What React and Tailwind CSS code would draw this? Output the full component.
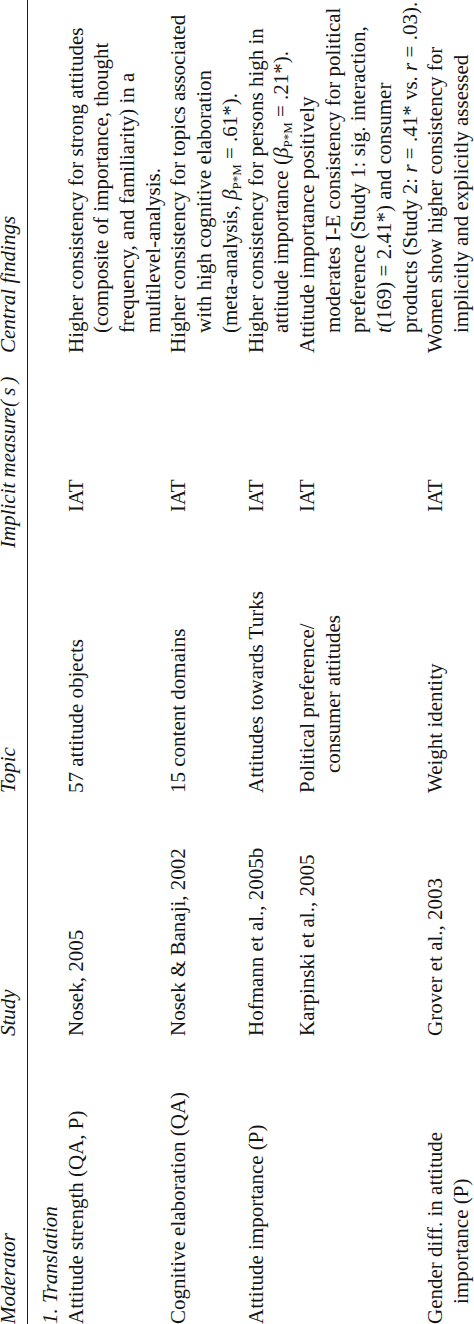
import React from "react";

const Beta = ({ sub }) => (
  <>
    <i>β</i>
    <span className="text-[13px] leading-none align-[-4px]">{sub}</span>
  </>
);

const rows = [
  {
    mod: ["Attitude strength (QA, P)"],
    study: "Nosek, 2005",
    topic: ["57 attitude objects"],
    imp: "IAT",
    find: [
      "Higher consistency for strong attitudes",
      "(composite of importance, thought",
      "frequency, and familiarity) in a",
      "multilevel-analysis.",
    ],
  },
  {
    mod: ["Cognitive elaboration (QA)"],
    study: "Nosek & Banaji, 2002",
    topic: ["15 content domains"],
    imp: "IAT",
    find: [
      "Higher consistency for topics associated",
      "with high cognitive elaboration",
      <>
        (meta-analysis, <Beta sub="P*M" /> = .61*).
      </>,
    ],
  },
  {
    mod: ["Attitude importance (P)"],
    study: "Hofmann et al., 2005b",
    topic: ["Attitudes towards Turks"],
    imp: "IAT",
    find: [
      "Higher consistency for persons high in",
      <>
        attitude importance (<Beta sub="P*M" /> = .21*).
      </>,
    ],
  },
  {
    mod: [],
    study: "Karpinski et al., 2005",
    topic: ["Political preference/", "consumer attitudes"],
    imp: "IAT",
    find: [
      "Attitude importance positively",
      "moderates I-E consistency for political",
      "preference (Study 1: sig. interaction,",
      <>
        <i>t</i>(169) = 2.41*) and consumer
      </>,
      <>
        products (Study 2: <i>r</i> = .41* vs. <i>r</i> = .03).
      </>,
    ],
  },
  {
    mod: ["Gender diff. in attitude", "importance (P)"],
    study: "Grover et al., 2003",
    topic: ["Weight identity"],
    imp: "IAT",
    find: [
      "Women show higher consistency for",
      "implicitly and explicitly assessed",
      "weight identity.",
    ],
  },
];

const Lines = ({ lines }) => (
  <div className="flex flex-col">
    {lines.map((l, i) => (
      <div key={i} className={i > 0 ? "pl-[20px] whitespace-nowrap" : "whitespace-nowrap"}>
        {l}
      </div>
    ))}
  </div>
);

export default function App() {
  return (
    <div className="w-[474px] h-[1324px] overflow-hidden bg-white">
      <div
        className="w-[1324px] h-[474px] origin-top-left translate-y-[1324px] -rotate-90 text-[21px] leading-[25.7px] text-[#151515]"
        style={{ fontFamily: '"Liberation Serif", "Times New Roman", serif' }}
      >
        <div className="grid grid-cols-[288px_243px_245px_195px_353px] h-[27.5px] border-b-[1.5px] border-[#1e1e1e] italic leading-[16px]">
          <div>Moderator</div>
          <div>Study</div>
          <div>Topic</div>
          <div>Implicit measure(&#8201;s&#8201;)</div>
          <div className="pl-[0px]">Central findings</div>
        </div>
        <div className="pt-[10.4px]">
          <div className="italic">1. Translation</div>
          {rows.map((r, i) => (
            <div key={i} className="grid grid-cols-[288px_243px_245px_195px_353px]">
              <Lines lines={r.mod} />
              <div className="whitespace-nowrap">{r.study}</div>
              <Lines lines={r.topic} />
              <div className="pl-[36px]">{r.imp}</div>
              <Lines lines={r.find} />
            </div>
          ))}
        </div>
      </div>
    </div>
  );
}
